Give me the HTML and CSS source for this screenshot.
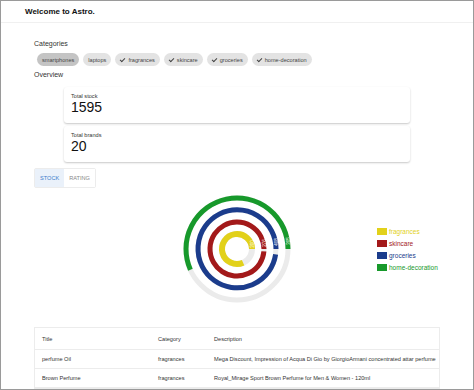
FILE: index.html
```html
<!DOCTYPE html>
<html lang="en">
<head>
    <meta charset="UTF-8">
    <meta name="viewport" content="width=device-width, initial-scale=1.0">
    <title>Astro</title>
    <link rel="stylesheet" href="styles.css">
</head>
<body>
    <div class="cerceve">
        <header class="ust">
            <h1>Welcome to Astro.</h1>
        </header>

        <main class="icerik">
            <p class="baslik">Categories</p>
            <div class="etiketler">
                <span class="etiket secili">smartphones</span>
                <span class="etiket">laptops</span>
                <span class="etiket"><i class="tik"></i>fragrances</span>
                <span class="etiket"><i class="tik"></i>skincare</span>
                <span class="etiket"><i class="tik"></i>groceries</span>
                <span class="etiket"><i class="tik"></i>home-decoration</span>
            </div>

            <p class="baslik">Overview</p>
            <div class="kartlar">
                <div class="kart">
                    <span class="kart-ad">Total stock</span>
                    <span class="kart-deger">1595</span>
                </div>
                <div class="kart">
                    <span class="kart-ad">Total brands</span>
                    <span class="kart-deger">20</span>
                </div>
            </div>

            <div class="sekmeler">
                <button class="sekme aktif">STOCK</button>
                <button class="sekme">RATING</button>
            </div>

            <div class="grafik">
                <div></div>
                <svg class="halkalar" width="120" height="120" viewBox="0 0 120 120">
                    <!-- arka izler -->
                    <circle cx="60" cy="60" r="51" class="iz" stroke-width="5"/>
                    <circle cx="60" cy="60" r="39" class="iz" stroke-width="5"/>
                    <circle cx="60" cy="60" r="27" class="iz" stroke-width="5"/>
                    <circle cx="60" cy="60" r="15" class="iz" stroke-width="6"/>
                    <!-- degerler -->
                    <path d="M111 60 A51 51 0 1 0 13.4 80.7" stroke="#17992b" stroke-width="5" fill="none"/>
                    <path d="M99 60 A39 39 0 1 0 98.6 65.4" stroke="#1b3c8c" stroke-width="5" fill="none"/>
                    <path d="M87 60 A27 27 0 1 0 86.9 62.4" stroke="#a3191a" stroke-width="5" fill="none"/>
                    <path d="M75 60 A15 15 0 1 0 66.1 73.7" stroke="#e2d11a" stroke-width="6" fill="none"/>
                    <text class="deger" transform="translate(111.5 52) rotate(-90)">305</text>
                    <text class="deger" transform="translate(99.5 53) rotate(-90)">408</text>
                    <text class="deger" transform="translate(87.5 54) rotate(-90)">276</text>
                    <text class="deger" transform="translate(76 55) rotate(-90)">300</text>
                </svg>
                <ul class="lejant">
                    <li class="sari"><i></i>fragrances</li>
                    <li class="kirmizi"><i></i>skincare</li>
                    <li class="mavi"><i></i>groceries</li>
                    <li class="yesil"><i></i>home-decoration</li>
                </ul>
            </div>

            <div class="tablo-kutu">
                <table class="tablo">
                    <thead>
                        <tr><th>Title</th><th>Category</th><th>Description</th></tr>
                    </thead>
                    <tbody>
                        <tr><td>perfume Oil</td><td>fragrances</td><td>Mega Discount, Impression of Acqua Di Gio by GiorgioArmani concentrated attar perfume</td></tr>
                        <tr><td>Brown Perfume</td><td>fragrances</td><td>Royal_Mirage Sport Brown Perfume for Men &amp; Women - 120ml</td></tr>
                    </tbody>
                </table>
            </div>
        </main>
    </div>
</body>
</html>
```

FILE: styles.css
```css
body {
    margin: 0;
    background-color: white;
    font-family: "Liberation Sans", Arial, sans-serif;
    color: #333;
}
.cerceve {
    height: 388px;
    overflow: hidden;
    border: 1px solid #9a9a9a;
}
.ust {
    height: 21px;
    border-bottom: 1px solid #f0f0f0;
    display: flex;
    align-items: center;
    padding-left: 24px;
}
.ust h1 {
    margin: 0;
    font-size: 8px;
    font-weight: bold;
    color: #111;
}
.icerik {
    padding: 0 33px;
}
.baslik {
    margin: 16px 0 0;
    font-size: 7px;
    line-height: 9px;
    color: #333;
}
.etiketler {
    display: flex;
    gap: 4px;
    margin: 5px 0 0 3px;
}
.etiket {
    display: flex;
    align-items: center;
    height: 13px;
    padding: 0 5px;
    border-radius: 7px;
    background-color: #e3e3e3;
    font-size: 5.6px;
    color: #444;
}
.etiket.secili {
    background-color: #c4c4c4;
}
.tik {
    width: 4px;
    height: 2px;
    border-left: 1px solid #444;
    border-bottom: 1px solid #444;
    transform: rotate(-45deg);
    margin: -1px 3px 0 0;
}
.etiketler + .baslik {
    margin-top: 4px;
}
.kartlar {
    width: 346px;
    margin: 8px auto 0;
    display: flex;
    flex-direction: column;
    gap: 3px;
}
.kart {
    height: 36px;
    box-sizing: border-box;
    padding: 6px 7px;
    border-radius: 3px;
    box-shadow: 0 1px 2px rgba(0, 0, 0, 0.22);
    display: flex;
    flex-direction: column;
}
.kart-ad {
    font-size: 5.6px;
    color: #333;
}
.kart-deger {
    font-size: 14px;
    line-height: 16px;
    color: #111;
}
.sekmeler {
    display: inline-flex;
    margin-top: 6px;
    border: 1px solid #ececec;
    border-radius: 2px;
}
.sekme {
    border: none;
    background: white;
    font-family: inherit;
    font-size: 5.6px;
    color: #888;
    height: 18px;
    padding: 0 5px;
}
.sekme.aktif {
    background-color: #eaf1fa;
    color: #3d7ccc;
}
.grafik {
    display: grid;
    grid-template-columns: 1fr 120px 1fr;
    align-items: center;
    margin-top: 1px;
}
.iz {
    fill: none;
    stroke: #ebebeb;
}
.deger {
    font-size: 4.5px;
    fill: white;
    text-anchor: middle;
    dominant-baseline: middle;
}
.lejant {
    list-style: none;
    margin: 0;
    padding: 0 0 0 80px;
    display: flex;
    flex-direction: column;
    gap: 4px;
    font-size: 6.5px;
}
.lejant li {
    display: flex;
    align-items: center;
    height: 8px;
}
.lejant i {
    width: 10px;
    height: 7px;
    margin-right: 2px;
}
.sari { color: #e2d11a; }
.sari i { background-color: #e2d11a; }
.kirmizi { color: #a3191a; }
.kirmizi i { background-color: #a3191a; }
.mavi { color: #1b3c8c; }
.mavi i { background-color: #1b3c8c; }
.yesil { color: #17992b; }
.yesil i { background-color: #17992b; }
.tablo-kutu {
    margin-top: 18px;
    border: 1px solid #ececec;
    overflow: hidden;
}
.tablo {
    border-collapse: collapse;
    width: 100%;
    table-layout: fixed;
    font-size: 5.6px;
    color: #333;
}
.tablo th {
    font-weight: normal;
    text-align: left;
    height: 21px;
}
.tablo th, .tablo td {
    padding: 0 7px;
    white-space: nowrap;
    overflow: hidden;
    border-bottom: 1px solid #ececec;
}
.tablo td {
    height: 18px;
}
.tablo th:nth-child(1) { width: 102px; }
.tablo th:nth-child(2) { width: 42px; }
```
